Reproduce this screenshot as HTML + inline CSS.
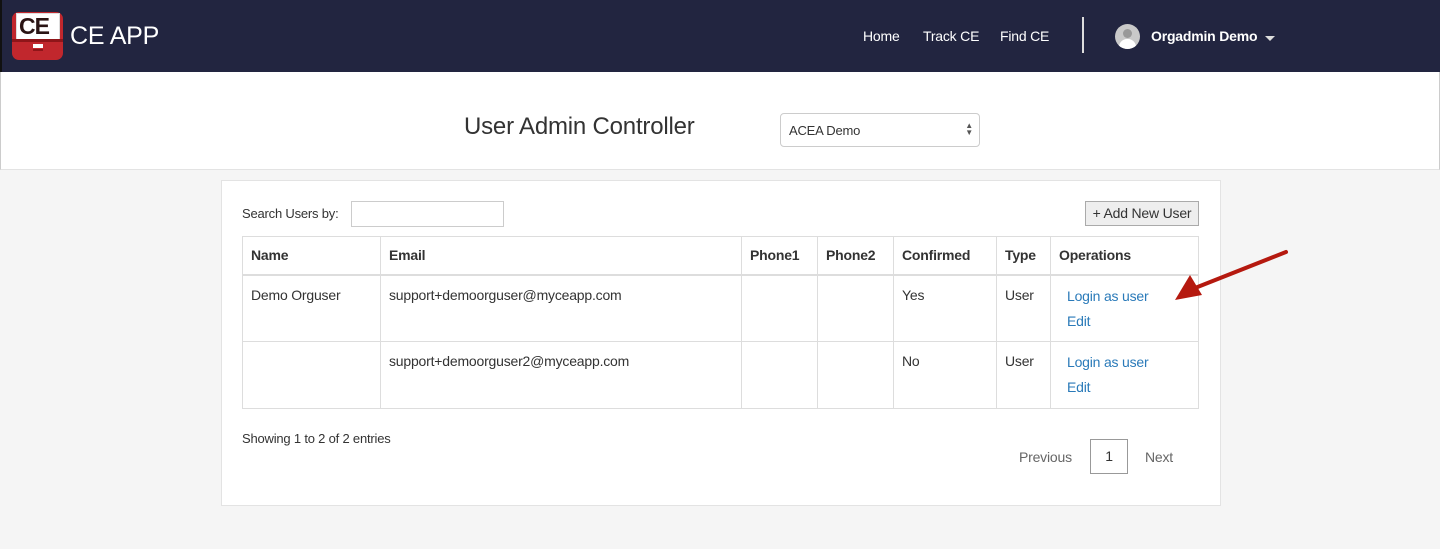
<!DOCTYPE html>
<html><head><meta charset="utf-8"><style>
*{box-sizing:border-box;margin:0;padding:0}
body{width:1440px;height:549px;overflow:hidden;background:#f5f5f5;font-family:"Liberation Sans",sans-serif;color:#333;position:relative;font-size:14px;letter-spacing:-0.2px}
.nav{position:absolute;left:0;top:0;width:1440px;height:72px;background:#222540;border-left:2px solid #111}
.abs{position:absolute}
.hdr{position:absolute;left:0;top:72px;width:1440px;height:98px;background:#fff;border-left:1px solid #ccc;border-right:1px solid #ccc;border-bottom:1px solid #e3e3e3}
.panel{position:absolute;left:221px;top:180px;width:1000px;height:326px;background:#fff;border:1px solid #e3e3e3}
table{position:absolute;left:242px;top:236px;width:957px;border-collapse:collapse;font-size:14px}
td,th{border:1px solid #ddd;text-align:left;vertical-align:top;padding:0 8px}
th{height:38px;vertical-align:middle;font-weight:bold;border-bottom:2px solid #ddd}
td{height:67px;padding-top:11px}
a{color:#2a7ab9;text-decoration:none}
.ops{padding-left:16px;line-height:25px;padding-top:8px}
</style></head><body>
<div class="nav">
 <div class="abs" style="left:10px;top:12px;width:51px;height:48px;background:#c1272d;border-radius:7px"></div>
 <div class="abs" style="left:14px;top:13px;width:44px;height:27px;background:#fff;border:1px solid #ddd"></div>
 <div class="abs" style="left:17px;top:13px;font:bold 23px 'Liberation Sans',sans-serif;color:#2a1414;letter-spacing:-1px">CE</div>
 <div class="abs" style="left:10px;top:39px;width:51px;height:3px;background:#8f1519"></div>
 <div class="abs" style="left:31px;top:44px;width:10px;height:4px;background:#fff"></div>
 <div class="abs" style="left:31px;top:49px;width:10px;height:2px;background:#8f1519"></div>
 <div class="abs" style="left:68px;top:22px;font-size:25px;color:#fff">CE APP</div>
 <div class="abs" style="left:861px;top:28px;color:#fff;font-size:14px">Home</div>
 <div class="abs" style="left:921px;top:28px;color:#fff;font-size:14px">Track CE</div>
 <div class="abs" style="left:998px;top:28px;color:#fff;font-size:14px">Find CE</div>
 <div class="abs" style="left:1080px;top:17px;width:2px;height:36px;background:#ddd"></div>
 <div class="abs" style="left:1113px;top:24px;width:25px;height:25px;border-radius:50%;background:#c9c9c9;overflow:hidden">
  <div class="abs" style="left:8px;top:5px;width:9px;height:9px;border-radius:50%;background:#999"></div>
  <div class="abs" style="left:4px;top:15px;width:17px;height:12px;border-radius:8px 8px 0 0;background:#fff"></div>
 </div>
 <div class="abs" style="left:1149px;top:28px;color:#fff;font-size:14px;font-weight:bold">Orgadmin Demo</div>
 <div class="abs" style="left:1263px;top:36px;width:0;height:0;border-left:5px solid transparent;border-right:5px solid transparent;border-top:5px solid #ddd"></div>
</div>
<div class="hdr">
 <div class="abs" style="left:463px;top:41px;font-size:24px;color:#333">User Admin Controller</div>
 <div class="abs" style="left:779px;top:41px;width:200px;height:34px;border:1px solid #ccc;border-radius:4px;background:#fff;font-size:13px;padding:9px 8px">ACEA Demo<span style="position:absolute;right:6px;top:8px;font-size:8px;line-height:7px;color:#555">▲<br>▼</span></div>
</div>
<div class="panel"></div>
<div class="abs" style="left:242px;top:206px;font-size:13px">Search Users by:</div>
<div class="abs" style="left:351px;top:201px;width:153px;height:26px;border:1px solid #ccc"></div>
<div class="abs" style="left:1085px;top:201px;width:114px;height:25px;border:1px solid #aaa;background:#eee;font-size:14px;text-align:center;line-height:23px">+ Add New User</div>
<table>
<tr><th style="width:138px">Name</th><th style="width:361px">Email</th><th style="width:76px">Phone1</th><th style="width:76px">Phone2</th><th style="width:103px">Confirmed</th><th style="width:54px">Type</th><th>Operations</th></tr>
<tr><td>Demo Orguser</td><td>support+demoorguser@myceapp.com</td><td></td><td></td><td>Yes</td><td>User</td><td class="ops"><a>Login as user</a><br><a>Edit</a></td></tr>
<tr><td></td><td>support+demoorguser2@myceapp.com</td><td></td><td></td><td>No</td><td>User</td><td class="ops"><a>Login as user</a><br><a>Edit</a></td></tr>
</table>
<div class="abs" style="left:242px;top:431px;font-size:13px">Showing 1 to 2 of 2 entries</div>
<div class="abs" style="left:1019px;top:449px;color:#666">Previous</div>
<div class="abs" style="left:1090px;top:439px;width:38px;height:35px;border:1px solid #999;text-align:center;line-height:33px">1</div>
<div class="abs" style="left:1145px;top:449px;color:#666">Next</div>
<svg class="abs" style="left:1170px;top:245px" width="125" height="60"><line x1="116" y1="7" x2="25" y2="43" stroke="#b5190f" stroke-width="4" stroke-linecap="round"/><polygon points="5,55 20,30 32,50" fill="#b5190f"/></svg>
</body></html>
